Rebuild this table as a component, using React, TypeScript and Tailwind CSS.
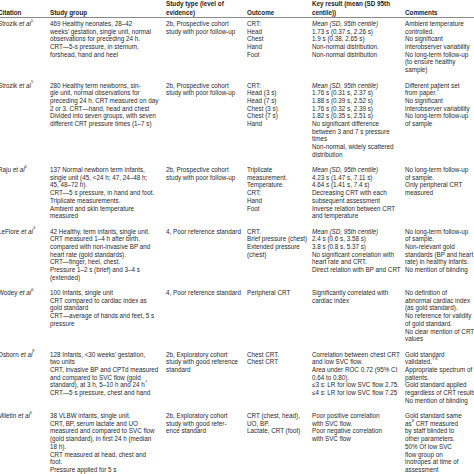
import React from 'react';

type Line = React.ReactNode;

interface Row {
  cite: string;
  sup: string;
  cells: Line[][];
}

const Sup: React.FC<{ children: React.ReactNode }> = ({ children }) => (
  <sup className="text-[4px] relative top-[-1px] align-super">{children}</sup>
);

const Mean = () => <i>Mean (SD, 95th centile)</i>;

const rows: Row[] = [
  {
    cite: 'Strozik',
    sup: '5',
    cells: [
      ['469 Healthy neonates, 28–42', 'weeks’ gestation, single unit, normal', 'observations for preceding 24 h.', 'CRT—5-s pressure, in sternum,', 'forshead, hand and heel'],
      ['2b, Prospective cohort', 'study with poor follow-up'],
      ['CRT:', 'Head', 'Chest', 'Hand', 'Foot'],
      [<Mean />, '1.73 s (0.37 s, 2.26 s)', '1.9 s (0.38, 2.65 s)', 'Non-normal distribution.', 'Non-normal distribution'],
      ['Ambient temperature', 'controlled.', 'No significant', 'interobserver variability', 'No long-term follow-up', '(to ensure healthy', 'sample)'],
    ],
  },
  {
    cite: 'Strozik',
    sup: '5',
    cells: [
      ['280 Healthy term newborns, sin-', 'gle unit, normal observations for', 'preceding 24 h. CRT measured on day', '2 or 3. CRT—hand, head and chest', 'Divided into seven groups, with seven', 'different CRT pressure times (1–7 s)'],
      ['2b, Prospective cohort', 'study with poor follow-up'],
      ['CRT:', 'Head (3 s)', 'Head (7 s)', 'Chest (3 s)', 'Chest (7 s)', 'Hand'],
      [<Mean />, '1.76 s (0.31 s, 2.37 s)', '1.88 s (0.39 s, 2.52 s)', '1.76 s (0.32 s, 2.39 s)', '1.82 s (0.35 s, 2.51 s)', 'No significant difference', 'between 3 and 7 s pressure', 'times', 'Non-normal, widely scattered', 'distribution'],
      ['Different patient set', <>from paper.<Sup>1</Sup></>, 'No significant', 'interobserver variability', 'No long-term follow-up', 'of sample'],
    ],
  },
  {
    cite: 'Raju',
    sup: '6',
    cells: [
      ['137 Normal newborn term infants,', 'single unit (45, <24 h; 47, 24–48 h;', '45, 48–72 h).', 'CRT—5 s pressure, in hand and foot.', 'Triplicate measurements.', 'Ambient and skin temperature', 'measured'],
      ['2b, Prospective cohort', 'study with poor follow-up'],
      ['Triplicate', 'measurement.', 'Temperature.', 'CRT:', 'Hand', 'Foot'],
      [<Mean />, '4.23 s (1.47 s, 7.11 s)', '4.64 s (1.41 s, 7.4 s)', 'Decreasing CRT with each', 'subsequent assessment', 'Inverse relation between CRT', 'and temperature'],
      ['No long-term follow-up', 'of sample.', 'Only peripheral CRT', 'measured'],
    ],
  },
  {
    cite: 'LeFlore',
    sup: '4',
    cells: [
      ['42 Healthy, term infants, single unit.', 'CRT measured 1–4 h after birth,', 'compared with non-invasive BP and', 'heart rate (gold standards).', 'CRT—finger, heel, chest.', 'Pressure 1–2 s (brief) and 3–4 s', '(extended)'],
      ['4, Poor reference standard'],
      ['CRT.', 'Brief pressure (chest)', 'Extended pressure', '(chest)'],
      [<Mean />, '2.4 s (0.6 s, 3.58 s)', '3.8 s (0.8 s, 5.37 s)', 'No significant correlation with', 'heart rate and CRT.', 'Direct relation with BP and CRT'],
      ['No long-term follow-up', 'of sample.', 'Non-relevant gold', 'standards (BP and heart', 'rate) in healthy infants.', 'No mention of blinding'],
    ],
  },
  {
    cite: 'Wodey',
    sup: '6',
    cells: [
      ['100 Infants, single unit', 'CRT compared to cardiac index as', 'gold standard', 'CRT—average of hands and feet, 5 s', 'pressure'],
      ['4, Poor reference standard'],
      ['Peripheral CRT'],
      ['Significantly correlated with', 'cardiac index'],
      ['No definition of', 'abnormal cardiac index', '(as gold standard).', 'No reference for validity', 'of gold standard.', 'No clear mention of CRT', 'values'],
    ],
  },
  {
    cite: 'Osborn',
    sup: '8',
    cells: [
      ['128 Infants, <30 weeks’ gestation,', 'two units', 'CRT, invasive BP and CPTd measured', 'and compared to SVC flow (gold', <>standard), at 3 h, 5–10 h and 24 h<Sup>7</Sup></>, 'CRT—5 s pressure, chest and hand'],
      ['2b, Exploratory cohort', 'study with good reference', 'standard'],
      ['Chest CRT.', 'Chest CRT'],
      ['Correlation between chest CRT', 'and low SVC flow.', 'Area under ROC 0.72 (95% CI', '0.64 to 0.80).', '≤3 s: LR for low SVC flow 2.75.', '≤4 s: LR for low SVC flow 7.25'],
      ['Gold standard', <>validated.<Sup>7 8</Sup></>, 'Appropriate spectrum of', 'patients.', 'Gold standard applied', 'regardless of CRT results', 'No mention of blinding'],
    ],
  },
  {
    cite: 'Miletin',
    sup: '9',
    cells: [
      ['38 VLBW infants, single unit.', 'CRT, BP, serum lactate and UO', 'measured and compared to SVC flow', '(gold standard), in first 24 h (median', '18 h).', 'CRT measured at head, chest and', 'foot.', 'Pressure applied for 5 s'],
      ['2b, Exploratory cohort', 'study with good refer-', 'ence standard'],
      ['CRT (chest, head),', 'UO, BP.', 'Lactate, CRT (foot)'],
      ['Poor positive correlation', 'with SVC flow.', 'Poor negative correlation', 'with SVC flow'],
      ['Gold standard same', <>as<Sup>8</Sup> CRT measured</>, 'by staff blinded to', 'other parameters.', '50% Of low SVC', 'flow group on', 'inotropes at time of', 'assessment'],
    ],
  },
];

const cols = 'grid grid-cols-[52px_116px_81px_65px_93px_100px]';

const Cell: React.FC<{ lines: Line[] }> = ({ lines }) => (
  <div className="flex flex-col">
    {lines.map((l, i) => (
      <div key={i} className="whitespace-nowrap h-[7.7px] leading-[7.7px]">{l}</div>
    ))}
  </div>
);

export default function App() {
  return (
    <div className="w-[474px] h-[474px] overflow-hidden bg-white">
      <div
        className="ml-[-2px] w-[507px] text-[6.3px] text-[#2a2a2a]"
        style={{ fontFamily: '"Liberation Sans", Arial, sans-serif' }}
      >
        <div className={`${cols} h-[17.5px] items-end border-b border-[#8a8a8a] pb-[2px] font-bold text-[#222]`}>
          <div className="leading-[8.5px]">Citation</div>
          <div className="leading-[8.5px]">Study group</div>
          <div className="leading-[8.5px]">
            <div>Study type (level of</div>
            <div>evidence)</div>
          </div>
          <div className="leading-[8.5px]">Outcome</div>
          <div className="leading-[8.5px]">
            <div>Key result (mean (SD 95th</div>
            <div>centile))</div>
          </div>
          <div className="leading-[8.5px]">Comments</div>
        </div>
        <div className="flex flex-col pt-[2.5px]">
          {rows.map((r, i) => (
            <div key={i} className={`${cols} pb-[7.7px]`}>
              <div className="whitespace-nowrap h-[7.7px] leading-[7.7px]">
                {r.cite} <i>et al</i>
                <Sup>{r.sup}</Sup>
              </div>
              {r.cells.map((c, j) => (
                <Cell key={j} lines={c} />
              ))}
            </div>
          ))}
        </div>
      </div>
    </div>
  );
}
